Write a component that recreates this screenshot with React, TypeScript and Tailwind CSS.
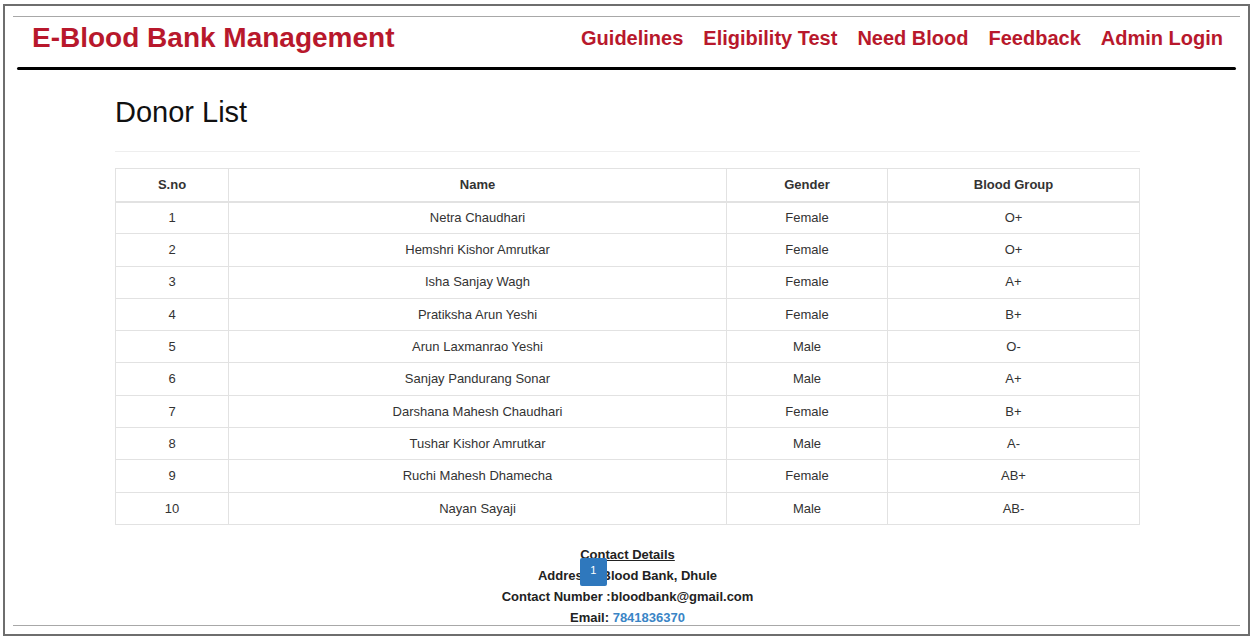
import React from "react";

// donor rows
const donors = [
  { name: "Netra Chaudhari", gender: "Female", group: "O+" },
  { name: "Hemshri Kishor Amrutkar", gender: "Female", group: "O+" },
  { name: "Isha Sanjay Wagh", gender: "Female", group: "A+" },
  { name: "Pratiksha Arun Yeshi", gender: "Female", group: "B+" },
  { name: "Arun Laxmanrao Yeshi", gender: "Male", group: "O-" },
  { name: "Sanjay Pandurang Sonar", gender: "Male", group: "A+" },
  { name: "Darshana Mahesh Chaudhari", gender: "Female", group: "B+" },
  { name: "Tushar Kishor Amrutkar", gender: "Male", group: "A-" },
  { name: "Ruchi Mahesh Dhamecha", gender: "Female", group: "AB+" },
  { name: "Nayan Sayaji", gender: "Male", group: "AB-" },
];

const navLinks = ["Guidelines", "Eligibility Test", "Need Blood", "Feedback", "Admin Login"];

export default function App() {
  return (
    <div className="w-[1254px] h-[640px] bg-white pt-[4px] pl-[3px] font-['Liberation_Sans',Arial,sans-serif] overflow-hidden">
      <div className="w-[1247px] h-[632px] border-2 border-[#6e6e6e] flex flex-col">
        {/* --- top rule --- */}
        <div className="mt-[10px] mx-[8px] h-px bg-[#a8a8a8]" />

        {/* --- HEADER --- */}
        <header className="flex items-center justify-between h-[50px] pb-[8px] pl-[27px] pr-[25px]">
          <h1 className="text-[28px] font-bold text-[#b8182c] leading-none">E-Blood Bank Management</h1>
          <nav className="flex gap-[20px] text-[20px] font-bold text-[#b8182c] leading-none">
            {navLinks.map((l) => (
              <a key={l} href="#">{l}</a>
            ))}
          </nav>
        </header>
        <div className="mx-[12px] h-[3px] bg-black rounded-full" />

        {/* --- DONOR LIST --- */}
        <main className="w-[1025px] ml-[110px] mt-[25px]">
          <h2 className="text-[29px] text-[#111] leading-[34px]">Donor List</h2>
          <div className="mt-[22px] h-px bg-[#eeeeee]" />

          <table className="mt-[16px] w-full border-collapse text-[13px] text-[#333] text-center">
            <thead>
              <tr className="h-[33px]">
                <th className="w-[113px] border border-[#e2e2e2] border-b-2 font-bold">S.no</th>
                <th className="w-[498px] border border-[#e2e2e2] border-b-2 font-bold">Name</th>
                <th className="w-[161px] border border-[#e2e2e2] border-b-2 font-bold">Gender</th>
                <th className="border border-[#e2e2e2] border-b-2 font-bold">Blood Group</th>
              </tr>
            </thead>
            <tbody>
              {donors.map((d, i) => (
                <tr key={d.name} className="h-[32.3px]">
                  <td className="border border-[#e2e2e2]">{i + 1}</td>
                  <td className="border border-[#e2e2e2]">{d.name}</td>
                  <td className="border border-[#e2e2e2]">{d.gender}</td>
                  <td className="border border-[#e2e2e2]">{d.group}</td>
                </tr>
              ))}
            </tbody>
          </table>
        </main>

        {/* --- CONTACT FOOTER --- */}
        <footer className="mt-[19px] pl-[2px] flex flex-col items-center text-[13px] font-bold text-[#222] leading-[21px]">
          <span className="underline">Contact Details</span>
          <span className="relative">
            Address : Blood Bank, Dhule
            <span className="absolute left-[42px] top-[-7px] w-[27px] h-[28px] bg-[#2f78bd] rounded-[2px] text-white text-[11px] font-normal flex justify-center pt-[7px] leading-none">
              1
            </span>
          </span>
          <span>Contact Number :bloodbank@gmail.com</span>
          <span>
            Email: <a href="#" className="text-[#3a85c6]">7841836370</a>
          </span>
        </footer>
        <div className="-mt-[3px] mx-[8px] h-px bg-[#a8a8a8]" />
      </div>
    </div>
  );
}
